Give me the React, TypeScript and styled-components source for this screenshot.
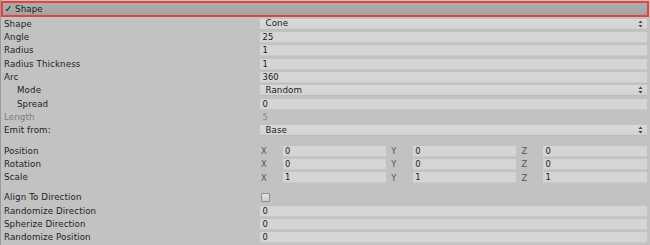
import styled, { createGlobalStyle } from "styled-components";

const GlobalStyle = createGlobalStyle`
  html, body {
    margin: 0;
    padding: 0;
    background: #c2c2c2;
    overflow: hidden;
  }
  body {
    font-family: "DejaVu Sans", Verdana, sans-serif;
  }
`;

const Panel = styled.div`
  width: 650px;
  height: 245px;
  box-sizing: border-box;
  background: #c2c2c2;
  border-left: 1px solid #9a9a9a;
  font-size: 8.7px;
  letter-spacing: 0.1px;
  color: #1e1e1e;
  overflow: hidden;
`;

const HeaderWrap = styled.div`
  height: 17.5px;
  box-sizing: border-box;
  padding: 0.5px 1px 0 0;
`;

const Header = styled.div`
  height: 16.5px;
  box-sizing: border-box;
  border: 2px solid #e6423e;
  background: linear-gradient(#ababab, #a9a9a9 70%, #a1a1a1);
  display: flex;
  align-items: center;
  padding-left: 1.5px;
  gap: 2.5px;
  color: #1a1a1a;
`;

const Check = styled.span`
  font-size: 9.5px;
  line-height: 10px;
`;

const Row = styled.div`
  height: 13.33px;
  display: grid;
  grid-template-columns: 259px 1fr;
  align-items: center;
  padding-right: 3.3px;
`;

const Spacer = styled.div<{ $h: number }>`
  height: ${({ $h }) => $h}px;
`;

const Label = styled.div<{ $indent?: boolean; $disabled?: boolean }>`
  padding-left: ${({ $indent }) => ($indent ? 16 : 3)}px;
  color: ${({ $disabled }) => ($disabled ? "#7d7d7d" : "#1e1e1e")};
  white-space: nowrap;
  line-height: 13px;
`;

const Field = styled.div`
  height: 11px;
  box-sizing: border-box;
  background: #d5d5d5;
  border-bottom: 1px solid #c9c9c9;
  padding-left: 2.5px;
  line-height: 11px;
  color: #1a1a1a;
  font-size: 8.4px;
`;

const ReadOnly = styled.div`
  height: 11px;
  padding-left: 2.5px;
  line-height: 11px;
  color: #8a8a8a;
  font-size: 8.4px;
`;

const Dropdown = styled.div`
  height: 11px;
  box-sizing: border-box;
  background: linear-gradient(#dadada, #d2d2d2);
  border-bottom: 1px solid #bdbdbd;
  padding: 0 4px 0 5.5px;
  display: flex;
  align-items: center;
  justify-content: space-between;
  color: #1a1a1a;
  line-height: 11px;
`;

const Vector = styled.div`
  display: grid;
  grid-template-columns: repeat(3, 1fr);
  gap: 4px;
`;

const Axis = styled.div`
  display: grid;
  grid-template-columns: 22.5px 1fr;
  align-items: center;
`;

const AxisLabel = styled.span`
  padding-left: 1px;
  color: #555;
  font-size: 8.4px;
`;

const Checkbox = styled.div`
  width: 9px;
  height: 9px;
  margin-left: 1px;
  box-sizing: border-box;
  border: 1px solid #8c8c8c;
  border-radius: 1px;
  background: linear-gradient(#e2e2e2, #cfcfcf);
`;

const Arrows = () => (
  <svg width="5" height="8" viewBox="0 0 5 8">
    <path d="M2.5 0.5 L4.5 3 L0.5 3 Z" fill="#444" />
    <path d="M2.5 7.5 L4.5 5 L0.5 5 Z" fill="#444" />
  </svg>
);

type VecProps = { x: string; y: string; z: string };

const VectorField = ({ x, y, z }: VecProps) => (
  <Vector>
    <Axis>
      <AxisLabel>X</AxisLabel>
      <Field>{x}</Field>
    </Axis>
    <Axis>
      <AxisLabel>Y</AxisLabel>
      <Field>{y}</Field>
    </Axis>
    <Axis>
      <AxisLabel>Z</AxisLabel>
      <Field>{z}</Field>
    </Axis>
  </Vector>
);

const Select = ({ value }: { value: string }) => (
  <Dropdown>
    <span>{value}</span>
    <Arrows />
  </Dropdown>
);

export default function App() {
  return (
    <>
      <GlobalStyle />
      <Panel>
        <HeaderWrap>
          <Header>
            <Check>✓</Check>
            <span>Shape</span>
          </Header>
        </HeaderWrap>

        <Row>
          <Label>Shape</Label>
          <Select value="Cone" />
        </Row>
        <Row>
          <Label>Angle</Label>
          <Field>25</Field>
        </Row>
        <Row>
          <Label>Radius</Label>
          <Field>1</Field>
        </Row>
        <Row>
          <Label>Radius Thickness</Label>
          <Field>1</Field>
        </Row>
        <Row>
          <Label>Arc</Label>
          <Field>360</Field>
        </Row>
        <Row>
          <Label $indent>Mode</Label>
          <Select value="Random" />
        </Row>
        <Row>
          <Label $indent>Spread</Label>
          <Field>0</Field>
        </Row>
        <Row>
          <Label $disabled>Length</Label>
          <ReadOnly>5</ReadOnly>
        </Row>
        <Row>
          <Label>Emit from:</Label>
          <Select value="Base" />
        </Row>

        <Spacer $h={7} />

        <Row>
          <Label>Position</Label>
          <VectorField x="0" y="0" z="0" />
        </Row>
        <Row>
          <Label>Rotation</Label>
          <VectorField x="0" y="0" z="0" />
        </Row>
        <Row>
          <Label>Scale</Label>
          <VectorField x="1" y="1" z="1" />
        </Row>

        <Spacer $h={6.7} />

        <Row>
          <Label>Align To Direction</Label>
          <Checkbox />
        </Row>
        <Row>
          <Label>Randomize Direction</Label>
          <Field>0</Field>
        </Row>
        <Row>
          <Label>Spherize Direction</Label>
          <Field>0</Field>
        </Row>
        <Row>
          <Label>Randomize Position</Label>
          <Field>0</Field>
        </Row>
      </Panel>
    </>
  );
}
